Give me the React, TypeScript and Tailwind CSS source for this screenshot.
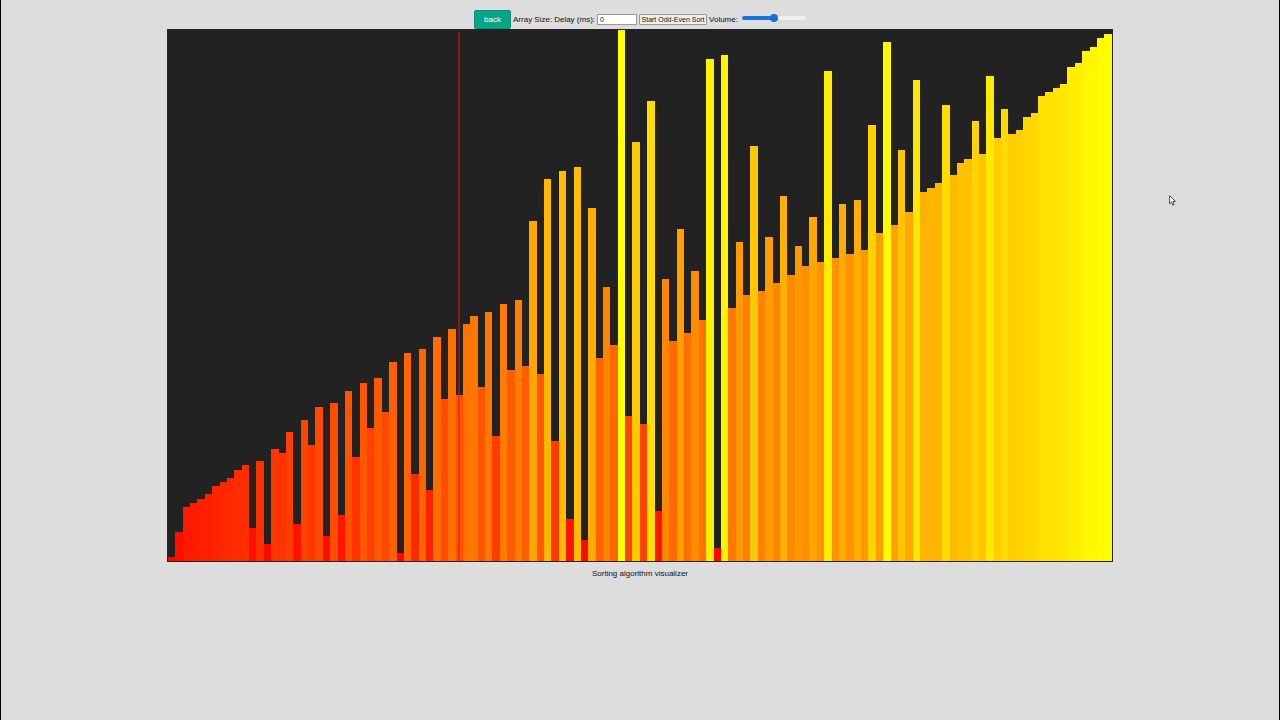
import React, { useState } from "react";

const values = [
  1, 7, 13, 14, 15, 16, 18, 19, 20, 22, 23, 8, 24, 4, 27, 26,
  31, 9, 34, 28, 37, 6, 38, 11, 41, 25, 43, 32, 44, 36, 48, 2,
  50, 21, 51, 17, 54, 39, 56, 40, 57, 59, 42, 60, 30, 62, 46, 63,
  47, 82, 45, 92, 29, 94, 10, 95, 5, 85, 49, 66, 52, 128, 35, 101,
  33, 111, 12, 68, 53, 80, 55, 70, 58, 121, 3, 122, 61, 77, 64, 100,
  65, 78, 67, 88, 69, 76, 71, 83, 72, 118, 73, 86, 74, 87, 75, 105,
  79, 125, 81, 99, 84, 116, 89, 90, 91, 110, 93, 96, 97, 106, 98, 117,
  102, 109, 103, 104, 107, 108, 112, 113, 114, 115, 119, 120, 123, 124, 126, 127,
];

const current = 39;

const Controls = () => {
  const [delay, setDelay] = useState("0");
  const [volume, setVolume] = useState(50);

  return (
    <div className="flex items-center justify-center gap-[2px] text-[8px] leading-[10px]">
      <button
        type="button"
        className="h-[19px] w-[37px] rounded-[2px] border border-[#0b8f77] bg-[#07a688] text-white"
      >
        back
      </button>
      <span>Array Size:</span>
      <label htmlFor="delay">Delay (ms):</label>
      <input
        id="delay"
        type="text"
        value={delay}
        onChange={(e) => setDelay(e.target.value)}
        className="h-[11px] w-[40px] border border-[#999] bg-white px-[2px] text-[7px] leading-[9px]"
      />
      <button
        type="button"
        className="h-[11px] w-[68px] whitespace-nowrap rounded-[1px] border border-[#999] bg-[#efefef] text-[7px] leading-[9px]"
      >
        Start Odd-Even Sort
      </button>
      <label htmlFor="volume">Volume:</label>
      <input
        id="volume"
        type="range"
        min="0"
        max="100"
        value={volume}
        onChange={(e) => setVolume(Number(e.target.value))}
        style={{
          backgroundImage: `linear-gradient(to right, #1a73d9 ${volume}%, #efefef ${volume}%)`,
        }}
        className="mb-[3px] ml-[2px] h-[4px] w-[64px] appearance-none rounded-full [&::-webkit-slider-thumb]:h-[8px] [&::-webkit-slider-thumb]:w-[8px] [&::-webkit-slider-thumb]:appearance-none [&::-webkit-slider-thumb]:rounded-full [&::-webkit-slider-thumb]:bg-[#1a6fd4]"
      />
    </div>
  );
};

const Chart = () => {
  return (
    <div className="mx-auto aspect-[946/533] w-[74%] border border-[#222] bg-[#222]">
      <svg
        viewBox="0 0 128 128"
        preserveAspectRatio="none"
        shapeRendering="crispEdges"
        className="block h-full w-full"
      >
        {values.map((v, i) => (
          <rect
            key={i}
            x={i}
            y={128 - v}
            width="1"
            height={v}
            fill={`rgb(255, ${Math.min(255, v * 2)}, 0)`}
          />
        ))}
        {/* playhead */}
        <line
          x1={current + 0.5}
          x2={current + 0.5}
          y1="0.5"
          y2={128 - values[current]}
          stroke="#8c1a1a"
          strokeWidth="2"
          vectorEffect="non-scaling-stroke"
        />
        <line
          x1={current + 0.5}
          x2={current + 0.5}
          y1={128 - values[current]}
          y2="128"
          stroke="#e83a00"
          strokeWidth="2"
          vectorEffect="non-scaling-stroke"
        />
      </svg>
    </div>
  );
};

const App = () => {
  return (
    <div className="relative min-h-screen border-x border-black bg-[#ddd] pt-[10px] font-['Liberation_Sans',Arial,sans-serif] text-[#111]">
      <Controls />
      <Chart />
      <p className="mt-[7px] text-center text-[8px] leading-[10px]">
        Sorting algorithm visualizer
      </p>

      {/* mouse pointer */}
      <svg
        viewBox="0 0 12 19"
        className="pointer-events-none absolute left-[1168px] top-[195px] h-[11px] w-[7px]"
      >
        <path
          d="M1 1v14l3.2-3 2.2 5.5 2.4-1L6.6 11H11z"
          fill="#fff"
          stroke="#333"
          strokeWidth="1.5"
        />
      </svg>
    </div>
  );
};

export default App;
